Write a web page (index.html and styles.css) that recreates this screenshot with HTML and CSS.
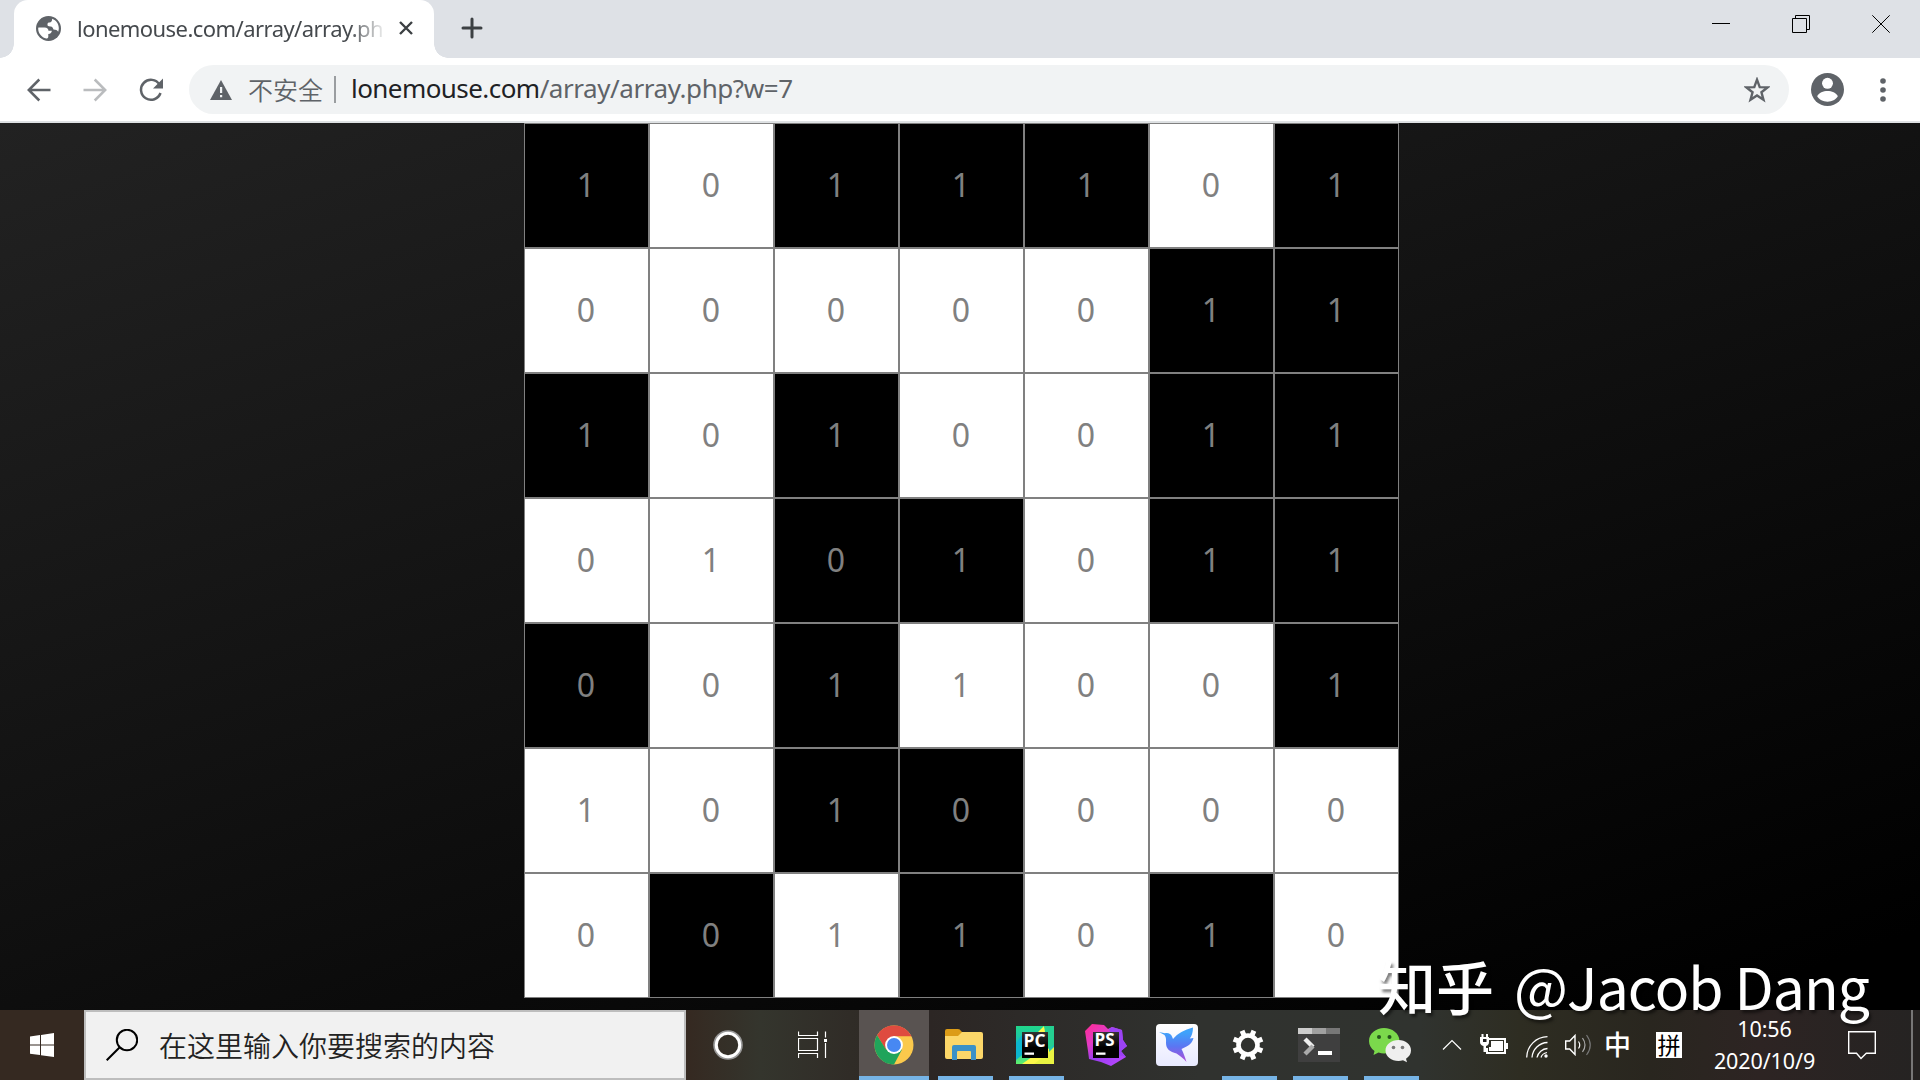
FILE: index.html
```
<!DOCTYPE html>
<html lang="zh-CN">
<head>
    <meta charset="UTF-8">
    <title>lonemouse.com/array/array.php?w=7</title>
    <link rel="stylesheet" href="styles.css">
</head>
<body>
<div class="desktop">

    <!-- tabs -->
    <div class="tabstrip">
        <div class="tab">
            <svg class="favicon" viewBox="0 0 24 24"><circle cx="12" cy="12" r="12"/><path d="M15.5 2.6c4 1.5 6.400 5 6.400 9.200 0 1.200-.2 2.300-.6 3.400-.8-1.700-2.300-2-4.500-2.200-.9-2.700-2-3.200-4.400-3.200-1 0-1.400-.6-1.400-1.600 0-1.300.7-1.900 2-1.900 1.600 0 2.500-1.300 2.500-3.700zM2.300 11h6c2.500.1 3.600 1.200 3.700 3.200h3.200c-.1 2-1.200 2.900-3.400 3v2.600c0 1-.8 1.700-1.900 1.900C5.300 20.500 2.100 16.500 2.100 12z"/></svg>
            <span class="tab-title">lonemouse.com/array/array.php?w=7</span>
            <svg class="tab-close" viewBox="0 0 14 14"><path d="M1 1l12 12M13 1L1 13"/></svg>
        </div>
        <svg class="new-tab" viewBox="0 0 22 22"><path d="M11 2v18M2 11h18"/></svg>
        <div class="window-buttons">
            <svg viewBox="0 0 18 18"><path d="M0 8.500h18"/></svg>
            <svg viewBox="0 0 18 18"><path d="M.5 3.500h14v14H.5zM3.500 3.500v-3h14v14h-3"/></svg>
            <svg viewBox="0 0 18 18"><path d="M.3.300l17.400 17.400M17.700.300L.3 17.700"/></svg>
        </div>
    </div>

    <!-- address bar -->
    <div class="toolbar">
        <svg class="nav" viewBox="0 0 24 24"><path d="M23.500 12H2M12.300 1.500L1.800 12l10.500 10.500"/></svg>
        <svg class="nav nav-off" viewBox="0 0 24 24"><path d="M.5 12H22M11.700 1.500L22.200 12 11.700 22.500"/></svg>
        <svg class="nav" viewBox="0 0 24 24"><path d="M20.500 6.500A10 10 0 1 0 21.500 15"/><path class="fill" d="M24 .5v10H14z"/></svg>
        <div class="omnibox">
            <svg class="warn" viewBox="0 0 22 20"><path d="M11 0l11 20H0z"/><path class="mark" d="M10 7h2.200v6H10zM10 15h2.200v2.200H10z"/></svg>
            <span class="insecure">不安全</span>
            <span class="divider"></span>
            <span class="url"><span class="host">lonemouse.com</span><span class="path">/array/array.php?w=7</span></span>
            <svg class="star" viewBox="0 0 24 24"><path d="M12 2.500l2.500 6.800 7.200.3-5.600 4.500 1.900 7-6-4-6 4 1.900-7-5.600-4.500 7.200-.3z"/></svg>
        </div>
        <svg class="avatar" viewBox="0 0 32 32"><circle cx="16" cy="16" r="16"/><circle class="white" cx="16" cy="10" r="5.300"/><path class="white" d="M6 22.500c1.500-3.300 6-5 10-5s8.500 1.700 10 5c-2 3.200-5.600 5.300-10 5.300S8 25.700 6 22.500z"/></svg>
        <svg class="menu" viewBox="0 0 6 24"><circle cx="3" cy="3" r="2.800"/><circle cx="3" cy="12" r="2.800"/><circle cx="3" cy="21" r="2.800"/></svg>
    </div>

    <!-- page -->
    <div class="page">
        <div class="grid">
            <i class="b">1</i><i>0</i><i class="b">1</i><i class="b">1</i><i class="b">1</i><i>0</i><i class="b">1</i>
            <i>0</i><i>0</i><i>0</i><i>0</i><i>0</i><i class="b">1</i><i class="b">1</i>
            <i class="b">1</i><i>0</i><i class="b">1</i><i>0</i><i>0</i><i class="b">1</i><i class="b">1</i>
            <i>0</i><i>1</i><i class="b">0</i><i class="b">1</i><i>0</i><i class="b">1</i><i class="b">1</i>
            <i class="b">0</i><i>0</i><i class="b">1</i><i>1</i><i>0</i><i>0</i><i class="b">1</i>
            <i>1</i><i>0</i><i class="b">1</i><i class="b">0</i><i>0</i><i>0</i><i>0</i>
            <i>0</i><i class="b">0</i><i>1</i><i class="b">1</i><i>0</i><i class="b">1</i><i>0</i>
        </div>
    </div>

    <!-- taskbar -->
    <div class="taskbar">
        <div class="start">
            <svg viewBox="0 0 24 24"><path d="M0 3.500L10 2v9.500H0zM11 1.900L24 0v11.500H11zM0 12.500h10V22L0 20.700zM11 12.500h13V24l-13-1.800z"/></svg>
        </div>
        <div class="search">
            <svg viewBox="0 0 32 32"><circle cx="21" cy="11" r="10.200"/><path d="M13.500 18.500L.7 31.300"/></svg>
            <span>在这里输入你要搜索的内容</span>
        </div>
        <div class="task cortana">
            <svg viewBox="0 0 30 30"><circle cx="15" cy="15" r="13.600" stroke="#999" stroke-width="2.400"/><circle cx="15" cy="15" r="11.700" stroke="#fff" stroke-width="3"/></svg>
        </div>
        <div class="task taskview">
            <svg viewBox="0 0 30 28"><path d="M.5.500v4h19v-4M.5 7.500h19v12H.5zM.5 27v-4.500h19V27M27.500.500v6M27.500 12v15"/><path d="M26 8h3v3h-3z" fill="#fff" stroke="none"/></svg>
        </div>
        <div class="task app active">
            <svg width="40" height="40" viewBox="0 0 40 40">
                <circle cx="20" cy="20" r="19.500" fill="#fbc94c"/>
                <path d="M3.100 10.300A19.500 19.500 0 0 1 36.900 10.300L37.400 11.200H20L12 25z" fill="#df4b3f"/>
                <path d="M3.100 10.300A19.500 19.500 0 0 0 20 39.500L28 24.500H12z" fill="#20a45b"/>
                <circle cx="20" cy="20" r="8.900" fill="#fff"/><circle cx="20" cy="20" r="7" fill="#4788f2"/>
            </svg>
        </div>
        <div class="task app open">
            <svg width="38" height="32" viewBox="0 0 38 32">
                <path d="M0 2Q0 0 2 0h11q2 0 3 2l2 2v6H0z" fill="#dc9c17"/>
                <path d="M0 7h13l4-4h19q2 0 2 2v23q0 2-2 2H2q-2 0-2-2z" fill="#fcd769"/>
                <path d="M7 31V18q0-2 2-2h20q2 0 2 2v13h-5v-8q0-1-1-1H13q-1 0-1 1v8z" fill="#3b91c7"/>
            </svg>
        </div>
        <div class="task app open">
            <svg width="38" height="38" viewBox="0 0 38 38">
                <defs><linearGradient id="pc" x1="0" y1="0" x2="0" y2="1"><stop offset="0" stop-color="#21d789"/><stop offset=".5" stop-color="#17bdbc"/><stop offset="1" stop-color="#5ff06b"/></linearGradient>
                <linearGradient id="dark" x1="0" y1="0" x2="0" y2="1"><stop offset="0" stop-color="#333"/><stop offset=".6" stop-color="#000"/></linearGradient></defs>
                <path d="M0 0h38v38H0z" fill="url(#pc)"/><path d="M22 6l6-6 5 13v20l-11 5H6l14-10z" fill="#fcf84a"/><path d="M28 0h10v19l-6 4z" fill="#24cf91"/><path d="M31 28l7-7v17H18z" fill="#e9f342"/><path d="M0 17l6-8v20L0 34z" fill="#0bb5ce"/>
                <path d="M6 6h26v26H6z" fill="url(#dark)"/>
                <text x="7.500" y="20.500" textLength="22" lengthAdjust="spacingAndGlyphs" class="logo-text">PC</text><path d="M8.500 26.500h9.500v2.300H8.500z" fill="#fff"/>
            </svg>
        </div>
        <div class="task app">
            <svg width="42" height="42" viewBox="0 0 42 42">
                <defs><linearGradient id="ps" x1="0" y1="0" x2=".8" y2="1"><stop offset="0" stop-color="#ff2a92"/><stop offset=".35" stop-color="#e33bc4"/><stop offset=".6" stop-color="#9a3df0"/><stop offset="1" stop-color="#b746ff"/></linearGradient></defs>
                <path d="M0 7L7 0l12 1 4 4 4-2 10 3 1 10 4 6-6 5 5 6-15 9-10-4-12-3L3 27z" fill="url(#ps)"/><path d="M24 5l3-2 10 3 1 10 4 6-6 5 5 6-8-2z" fill="#9b43f4"/>
                <path d="M8 8h26v26H8z" fill="url(#dark)"/>
                <text x="9.500" y="22" textLength="20" lengthAdjust="spacingAndGlyphs" class="logo-text">PS</text><path d="M11 28.500h9.500v2.300H11z" fill="#fff"/>
            </svg>
        </div>
        <div class="task app">
            <svg width="42" height="42" viewBox="0 0 42 42">
                <defs><linearGradient id="bird" x1="0" y1="0" x2="0" y2="1"><stop offset=".15" stop-color="#3fa2fb"/><stop offset=".55" stop-color="#5b76f2"/><stop offset="1" stop-color="#b34bd6"/></linearGradient>
                <linearGradient id="tile" x1="0" y1="0" x2="0" y2="1"><stop offset="0" stop-color="#fff"/><stop offset="1" stop-color="#e8eaff"/></linearGradient></defs>
                <rect width="42" height="42" rx="4" fill="url(#tile)"/>
                <path d="M3 8l6 1.300c3-.8 6 .5 7 3.200l1 2.500c5-6 11-9 20-11.500-.2 5-1 8-3.200 11l3.700-.5c-1 4.500-4 7.500-10 10l-2 1c2 4 3.500 8 5 13-3-3.500-6-6-10-8.500C14 28 10 25 10 19c0-3 .5-5-1.500-8z" fill="url(#bird)"/>
            </svg>
        </div>
        <div class="task app open">
            <svg width="32" height="32" viewBox="0 0 32 32">
                <circle cx="16" cy="16" r="9.500" fill="none" stroke="#fff" stroke-width="4.600"/>
                <g fill="none" stroke="#fff" stroke-width="5"><path id="cog" d="M16 .5v4.500M16 27v4.500" transform="rotate(22.500 16 16)"/><use href="#cog" transform="rotate(45 16 16)"/><use href="#cog" transform="rotate(90 16 16)"/><use href="#cog" transform="rotate(135 16 16)"/></g>
            </svg>
        </div>
        <div class="task app open">
            <svg width="42" height="34" viewBox="0 0 42 34">
                <path d="M0 0h42v34H0z" fill="#3f3f3f"/><path d="M0 0h14v6H0z" fill="#ccc"/><path d="M14 0h14v6H14z" fill="#a0a0a0"/><path d="M28 0h14v6H28z" fill="#777"/>
                <path d="M7 11l8 8" stroke="#eee" stroke-width="4.500"/><path d="M15 18l-8 8" stroke="#aaa" stroke-width="4.500"/><path d="M20 23h14v4H20z" fill="#fff"/>
            </svg>
        </div>
        <div class="task app open">
            <svg width="42" height="36" viewBox="0 0 42 36">
                <path d="M15 1C7 1 0 6.500 0 14c0 4 2 7.500 5.500 10L4.500 28l5-2.500c2 .6 3.500.9 5.500.9 8 0 15.500-5 15.500-12.500S23 1 15 1z" fill="#7bd94c"/><circle cx="10" cy="10" r="2" fill="#24551c"/><circle cx="20.500" cy="10" r="2" fill="#24551c"/>
                <path d="M29.500 13C22.500 13 16.500 17.500 16.500 23.500S22.500 34 29.500 34c1.500 0 3-.2 4.500-.7l4 2-1-3.500c3-2 5-5 5-8.300C42 17.500 36.500 13 29.500 13z" fill="#efefef"/><circle cx="24.500" cy="20.500" r="1.800" fill="#777"/><circle cx="33.500" cy="20.500" r="1.800" fill="#777"/>
            </svg>
        </div>

        <div class="tray">
            <svg class="chevron" viewBox="0 0 20 12"><path d="M1 10.500l9-9 9 9"/></svg>
            <svg class="battery" viewBox="0 0 28 22"><path d="M9 5h16v14H7v-5" stroke-width="2"/><path d="M11 7h12v10H9v-4h2zM26 9h2v6h-2zM0 3h9v5q0 3-3 4v6H3.500v-6Q0 11 0 8z" fill="#fff" stroke="none"/><path d="M2.500 0v3M7 0v3" stroke-width="2"/><path d="M3 5h3.500v3H3z" fill="#222" stroke="none"/></svg>
            <svg class="wifi" viewBox="0 0 22 22"><path d="M.7 21.500A21 21 0 0 1 21.500.7M6 21.500A16 16 0 0 1 21.500 6.500M11 21.500A11 11 0 0 1 21.500 12.500" stroke-width="1.300"/><circle cx="20" cy="20" r="1.700" fill="#fff" stroke="none"/><path d="M15 21.500q1-4 6-5"/></svg>
            <svg class="volume" viewBox="0 0 27 22"><path d="M.7 7h4L10 1.500v19L4.700 15h-4z" stroke-width="1.400"/><path d="M13.500 7.500q2.500 3.500 0 7"/><path d="M17.500 4q5 7 0 14" stroke="#aaa"/><path d="M21.500 1q7.500 10 0 20" stroke="#777"/></svg>
            <span class="ime-lang">中</span>
            <span class="ime-mode">拼</span>
            <div class="clock"><span>10:56</span><span>2020/10/9</span></div>
            <svg class="notice" viewBox="0 0 28 29"><path d="M.7.700h26.600v21.500h-9L13 27.500l-4.500-5.300H.7z" stroke-width="1.400"/></svg>
            <span class="show-desktop"></span>
        </div>
    </div>

    <div class="watermark"><span class="brand">知乎</span><span class="author">@Jacob Dang</span></div>
</div>
</body>
</html>
```
FILE: styles.css
```
* {
    box-sizing: border-box;
}
body {
    margin: 0;
    font-family: "Noto Sans", "Noto Sans CJK SC", sans-serif;
}
svg {
    display: block;
    flex: none;
}
.desktop {
    position: relative;
    width: 1920px;
    height: 1080px;
    overflow: hidden;
    display: flex;
    flex-direction: column;
}

/* tab strip */
.tabstrip {
    height: 58px;
    flex: none;
    display: flex;
    background: #dee1e6;
}
.tab {
    position: relative;
    width: 420px;
    margin-left: 14px;
    padding: 0 20px 2px 22px;
    display: flex;
    align-items: center;
    background: #fff;
    border-radius: 14px 14px 0 0;
}
/* the flared feet of the tab */
.tab::before,
.tab::after {
    content: "";
    position: absolute;
    bottom: 0;
    width: 14px;
    height: 14px;
}
.tab::before {
    left: -14px;
    background: radial-gradient(circle at 0 0, #dee1e6 13.5px, #fff 14px);
}
.tab::after {
    right: -14px;
    background: radial-gradient(circle at 100% 0, #dee1e6 13.5px, #fff 14px);
}
.favicon {
    width: 25px;
    height: 25px;
    fill: #5f6368;
}
.favicon path {
    fill: #fff;
}
.tab-title {
    width: 307px;
    margin-left: 16px;
    overflow: hidden;
    white-space: nowrap;
    font-size: 22px;
    line-height: 30px;
    letter-spacing: -0.55px;
    color: #45494d;
    -webkit-mask-image: linear-gradient(to right, #000 272px, transparent 310px);
    mask-image: linear-gradient(to right, #000 272px, transparent 310px);
}
.tab-close {
    width: 14px;
    height: 14px;
    margin-left: 15px;
    fill: none;
    stroke: #3c4043;
    stroke-width: 2.4;
}
.new-tab {
    width: 22px;
    height: 22px;
    margin: 17px 0 0 27px;
    fill: none;
    stroke: #3c4043;
    stroke-width: 3;
    stroke-linecap: round;
}
.window-buttons {
    margin-left: auto;
    padding: 15px 30px 0 0;
    display: flex;
    gap: 62px;
}
.window-buttons svg {
    width: 18px;
    height: 18px;
    fill: none;
    stroke: #000;
    stroke-width: 1;
}

/* toolbar */
.toolbar {
    height: 65px;
    flex: none;
    padding: 0 34px 0 27px;
    display: flex;
    align-items: center;
    background: #fff;
    border-bottom: 2px solid #dee1e3;
}
.nav {
    width: 24px;
    height: 24px;
    margin-right: 32px;
    fill: none;
    stroke: #5f6368;
    stroke-width: 2.5;
}
.nav-off {
    stroke: #babcbe;
}
.nav .fill {
    fill: #5f6368;
    stroke: none;
}
.omnibox {
    width: 1600px;
    height: 49px;
    margin-left: -6px;
    padding: 0 19px 0 21px;
    display: flex;
    align-items: center;
    background: #f1f3f4;
    border-radius: 25px;
}
.warn {
    width: 22px;
    height: 20px;
    fill: #5f6368;
}
.warn .mark {
    fill: #f1f3f4;
}
.insecure {
    margin: -2px 0 0 16px;
    font-family: "Noto Sans CJK SC", sans-serif;
    font-weight: 350;
    font-size: 25px;
    line-height: 36px;
    color: #5f6368;
}
.divider {
    width: 2px;
    height: 27px;
    margin: 0 15px 0 11px;
    background: #9a9da0;
}
.url {
    margin-top: -3px;
    font-size: 26px;
    line-height: 36px;
    white-space: nowrap;
}
.host {
    letter-spacing: -0.56px;
    color: #202124;
}
.path {
    letter-spacing: -0.43px;
    color: #5f6368;
}
.star {
    width: 26px;
    height: 26px;
    margin-left: auto;
    fill: none;
    stroke: #5f6368;
    stroke-width: 2.2;
}
.avatar {
    width: 33px;
    height: 33px;
    margin-left: 22px;
    fill: #5f6368;
}
.avatar .white {
    fill: #fff;
}
.menu {
    width: 6px;
    height: 24px;
    margin-left: auto;
    fill: #5f6368;
}

/* page with the matrix */
.page {
    height: 887px;
    flex: none;
    padding-left: 524px;
    background: linear-gradient(160deg, #222 0%, #000 95%);
}
.grid {
    display: grid;
    grid-template-columns: repeat(7, 125px);
    grid-auto-rows: 125px;
}
.grid i {
    border: 1px solid #808080;
    padding-right: 1px;
    font-style: normal;
    font-size: 32px;
    line-height: 122px;
    text-align: center;
    color: #808080;
    background: #fff;
}
.grid .b {
    background: #000;
}

/* taskbar */
.taskbar {
    height: 70px;
    flex: none;
    display: flex;
    background: linear-gradient(to right, #352921 0, #352921 686px, #34352d 760px, #302c27 850px, #2c2624 930px, #2d2b29 1040px, #30322f 1200px, #30332f 1420px, #2e2d22 1520px, #29261f 1650px, #2d2423 1760px, #252322 1920px);
}
.start {
    width: 84px;
    display: flex;
    align-items: center;
    justify-content: center;
}
.start svg {
    width: 24px;
    height: 24px;
    fill: #fff;
}
.search {
    width: 602px;
    padding-left: 20px;
    display: flex;
    align-items: center;
    background: #f1f1f1;
    border: 2px solid #bdbdbd;
    font-family: "Noto Sans CJK SC", sans-serif;
    font-weight: 350;
    font-size: 28px;
    color: #222;
}
.search svg {
    width: 32px;
    height: 32px;
    margin-right: 21px;
    fill: none;
    stroke: #000;
    stroke-width: 2;
}
.task {
    display: flex;
    align-items: center;
    justify-content: center;
}
.cortana {
    width: 84px;
}
.cortana svg {
    width: 30px;
    height: 30px;
    fill: none;
}
.taskview {
    width: 89px;
    padding-right: 3px;
}
.taskview svg {
    width: 30px;
    height: 28px;
    fill: none;
    stroke: #fff;
    stroke-width: 1.2;
}
.app {
    position: relative;
    width: 71px;
    padding-right: 3px;
}
.active {
    background: #595351;
    background-clip: content-box;
    padding-right: 1px;
}
/* running marker */
.open::after,
.active::after {
    content: "";
    position: absolute;
    left: 8px;
    bottom: 0;
    width: 55px;
    height: 4px;
    background: #76b4e6;
}
.active::after {
    left: 0;
    width: 70px;
}
.logo-text {
    font-family: "Open Sans", sans-serif;
    font-weight: 700;
    font-size: 17px;
    fill: #fff;
}

/* tray */
.tray {
    flex: 1;
    padding-left: 15px;
    display: flex;
    align-items: center;
    color: #fff;
}
.tray svg {
    fill: none;
    stroke: #fff;
    stroke-width: 1.2;
}
.chevron {
    width: 20px;
    height: 12px;
    margin-right: 18px;
}
.battery {
    width: 28px;
    height: 22px;
    margin-right: 18px;
}
.wifi {
    width: 22px;
    height: 22px;
    margin: 4px 17px 0 0;
}
.volume {
    width: 27px;
    height: 22px;
    margin-right: 12px;
}
.ime-lang {
    width: 28px;
    margin: -2px 24px 0 0;
    font-family: "Noto Sans CJK SC", sans-serif;
    font-weight: 500;
    font-size: 27px;
    line-height: 28px;
}
.ime-mode {
    width: 26px;
    height: 26px;
    background: #fff;
    color: #000;
    font-family: "Noto Sans CJK SC", sans-serif;
    font-size: 23px;
    line-height: 25px;
    text-align: center;
}
.clock {
    width: 166px;
    padding-right: 1px;
    display: flex;
    flex-direction: column;
    align-items: center;
    font-size: 21.5px;
    line-height: 32px;
    letter-spacing: -0.1px;
}
.notice {
    width: 28px;
    height: 29px;
}
.show-desktop {
    width: 2px;
    height: 70px;
    margin-left: 35px;
    background: #777;
}

.watermark {
    position: absolute;
    left: 1378px;
    top: 943px;
    display: flex;
    gap: 20px;
    font-family: "Noto Sans CJK SC", sans-serif;
    font-size: 57px;
    line-height: 84px;
    white-space: nowrap;
    color: #fff;
    text-shadow: 2px 3px 3px rgba(0, 0, 0, 0.5);
}
.brand {
    font-size: 58px;
    font-weight: 500;
}
.author {
    letter-spacing: -0.9px;
}
```
